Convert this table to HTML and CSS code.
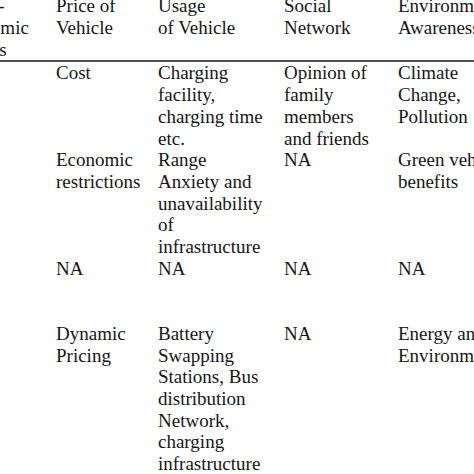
FILE: index.html
```html
<!DOCTYPE html>
<html lang="en">
<head>
<meta charset="utf-8">
<title>Factors table</title>
<link rel="stylesheet" href="styles.css">
</head>
<body>
<div class="table">
  <div class="row head">
    <div class="cell c1">Socio-economic factors</div>
    <div class="cell c2">Price of Vehicle</div>
    <div class="cell c3">Usage<br>of Vehicle</div>
    <div class="cell c4">Social Network</div>
    <div class="cell c5">Environmental Awareness</div>
  </div>
  <div class="row r-4">
    <div class="cell c1"></div>
    <div class="cell c2">Cost</div>
    <div class="cell c3">Charging facility, charging time etc.</div>
    <div class="cell c4">Opinion of family members and friends</div>
    <div class="cell c5">Climate Change, Pollution</div>
  </div>
  <div class="row r-5">
    <div class="cell c1"></div>
    <div class="cell c2">Economic restrictions</div>
    <div class="cell c3">Range Anxiety and unavailability of infrastructure</div>
    <div class="cell c4">NA</div>
    <div class="cell c5">Green vehicle benefits</div>
  </div>
  <div class="row r-3">
    <div class="cell c1"></div>
    <div class="cell c2">NA</div>
    <div class="cell c3">NA</div>
    <div class="cell c4">NA</div>
    <div class="cell c5">NA</div>
  </div>
  <div class="row">
    <div class="cell c1"></div>
    <div class="cell c2">Dynamic Pricing</div>
    <div class="cell c3">Battery Swapping Stations, Bus distribution Network, charging infrastructure</div>
    <div class="cell c4">NA</div>
    <div class="cell c5">Energy and Environment</div>
  </div>
</div>
</body>
</html>
```

FILE: styles.css
```css
html, body {
  margin: 0;
  padding: 0;
  background: #ffffff;
  overflow: hidden;
  width: 474px;
  height: 474px;
}

.table {
  margin-top: -4.7px;
  margin-left: -45px;
  width: 580px;
  font-family: "Liberation Serif", "Times New Roman", serif;
  font-size: 19px;
  line-height: 21.7px;
  color: #161616;
}

.row {
  display: grid;
  grid-template-columns: 101px 102px 126px 114px 237px;
}

.head {
  border-bottom: 2px solid #505050;
  height: 65.1px;
  box-sizing: content-box;
}

.r-3 {
  min-height: 65.1px;
}

.cell {
  text-align: left;
}

.c1 { padding-right: 4px; }
.c2 { padding-right: 6px; }
.c3 { padding-right: 14px; }
.c4 { padding-right: 19px; }
.c5 { padding-right: 117px; }
```
